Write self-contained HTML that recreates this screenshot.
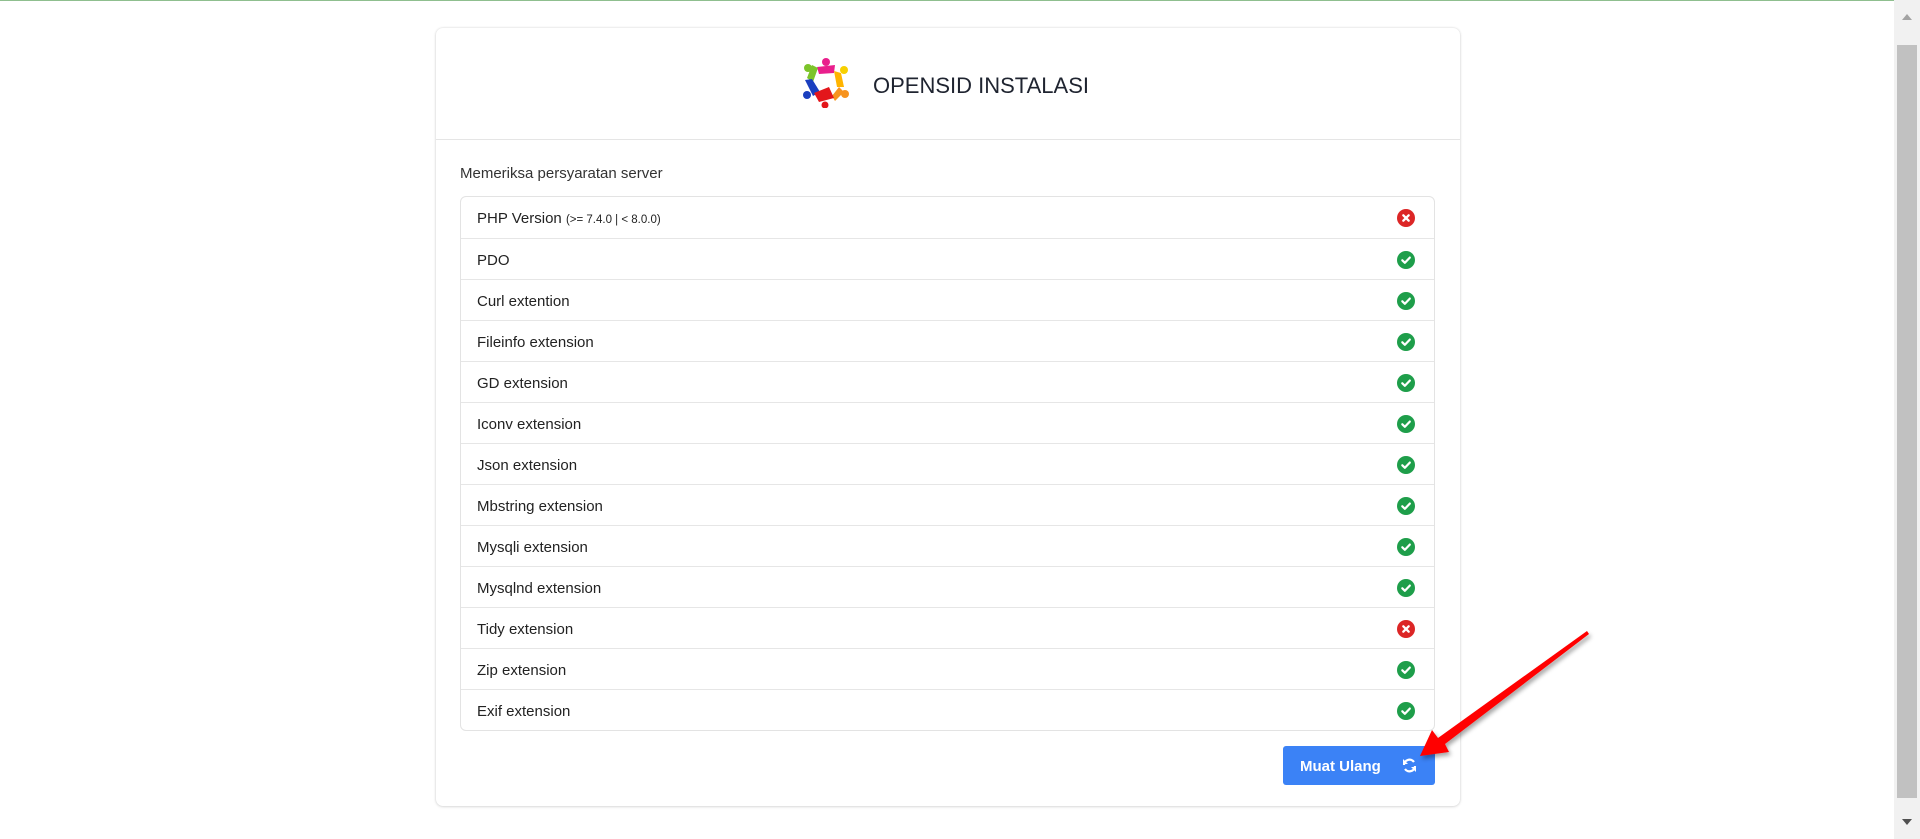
<!DOCTYPE html>
<html><head><meta charset="utf-8">
<style>
*{box-sizing:border-box;margin:0;padding:0}
body{width:1920px;height:839px;overflow:hidden;background:#fff;font-family:"Liberation Sans",sans-serif;color:#212529;position:relative}
.topline{position:absolute;left:0;top:0;width:1894px;height:1px;background:#8fbf8f}
.card{position:absolute;left:436px;top:28px;width:1024px;height:778px;border-radius:7px;background:#fff;box-shadow:0 0 2px rgba(0,0,0,.15),0 1px 3px rgba(0,0,0,.1)}
.hdr{height:112px;border-bottom:1px solid #e5e5e5;position:relative}
.title{position:absolute;left:437px;top:45px;font-size:22px;font-weight:500;color:#1f2430}
.logo{position:absolute;left:367px;top:30px}
.sub{position:absolute;left:24px;top:137px;font-size:15px;color:#333}
.list{position:absolute;left:24px;top:168px;width:975px;border:1px solid #e3e3e3;border-radius:6px}
.row{height:41px;border-top:1px solid #e6e6e6;position:relative;font-size:15px;line-height:43px;padding-left:16px;color:#222}
.row:first-child{border-top:none}
.row small{font-size:11.5px}
.ic{position:absolute;right:19px;top:12px;width:18px;height:18px;border-radius:50%}
.ok{background:#1e9e4a}.no{background:#dc2626}
.ic svg{position:absolute;left:0;top:0}
.btn{position:absolute;left:847px;top:718px;width:152px;height:39px;background:#3b82f6;border-radius:3px;color:#fff;font-weight:bold;font-size:15px;line-height:41px;padding-left:17px}
.btn svg{position:absolute;left:118px;top:11px}
.sb{position:absolute;left:1894px;top:0;width:26px;height:839px;background:#f1f1f1}
.thumb{position:absolute;left:3px;top:45px;width:20px;height:753px;background:#c1c1c1}
</style></head><body>
<div class="topline"></div>
<div class="card">
 <div class="hdr">
  <svg class="logo" width="46" height="50" viewBox="0 0 46 50">
   <circle cx="23" cy="4" r="4" fill="#e91e8c"/><path d="M14 9 L32 7 L31 15 L16 16Z" fill="#e91e8c"/>
   <circle cx="5" cy="10" r="4" fill="#7cc42a"/><path d="M9 7 L15 10 L10 24 L4 20Z" fill="#7cc42a"/>
   <circle cx="41" cy="12" r="4" fill="#f7d000"/><path d="M31 13 L38 15 L41 29 L34 29Z" fill="#ffb400"/>
   <circle cx="4" cy="37" r="4" fill="#1a3fbf"/><path d="M2 22 L9 21 L17 34 L10 38Z" fill="#1a3fbf"/>
   <circle cx="42" cy="36" r="4" fill="#f7931e"/><path d="M36 29 L41 34 L32 43 L29 38Z" fill="#f7931e"/>
   <circle cx="22" cy="47" r="3.5" fill="#e3161b"/><path d="M11 35 L26 29 L31 40 L16 44Z" fill="#e3161b"/>
  </svg>
  <div class="title">OPENSID INSTALASI</div>
 </div>
 <div class="sub">Memeriksa persyaratan server</div>
 <div class="list">
  <div class="row">PHP Version <small>(&gt;= 7.4.0 | &lt; 8.0.0)</small><span class="ic no"><svg width="18" height="18"><path d="M6.3 6.3L11.7 11.7M11.7 6.3L6.3 11.7" stroke="#fff" stroke-width="2.3" stroke-linecap="round"/></svg></span></div>
  <div class="row">PDO<span class="ic ok"><svg width="18" height="18"><path d="M5.3 9.3L7.9 11.8L12.8 6.6" stroke="#fff" stroke-width="2.2" fill="none" stroke-linecap="round" stroke-linejoin="round"/></svg></span></div>
  <div class="row">Curl extention<span class="ic ok"><svg width="18" height="18"><path d="M5.3 9.3L7.9 11.8L12.8 6.6" stroke="#fff" stroke-width="2.2" fill="none" stroke-linecap="round" stroke-linejoin="round"/></svg></span></div>
  <div class="row">Fileinfo extension<span class="ic ok"><svg width="18" height="18"><path d="M5.3 9.3L7.9 11.8L12.8 6.6" stroke="#fff" stroke-width="2.2" fill="none" stroke-linecap="round" stroke-linejoin="round"/></svg></span></div>
  <div class="row">GD extension<span class="ic ok"><svg width="18" height="18"><path d="M5.3 9.3L7.9 11.8L12.8 6.6" stroke="#fff" stroke-width="2.2" fill="none" stroke-linecap="round" stroke-linejoin="round"/></svg></span></div>
  <div class="row">Iconv extension<span class="ic ok"><svg width="18" height="18"><path d="M5.3 9.3L7.9 11.8L12.8 6.6" stroke="#fff" stroke-width="2.2" fill="none" stroke-linecap="round" stroke-linejoin="round"/></svg></span></div>
  <div class="row">Json extension<span class="ic ok"><svg width="18" height="18"><path d="M5.3 9.3L7.9 11.8L12.8 6.6" stroke="#fff" stroke-width="2.2" fill="none" stroke-linecap="round" stroke-linejoin="round"/></svg></span></div>
  <div class="row">Mbstring extension<span class="ic ok"><svg width="18" height="18"><path d="M5.3 9.3L7.9 11.8L12.8 6.6" stroke="#fff" stroke-width="2.2" fill="none" stroke-linecap="round" stroke-linejoin="round"/></svg></span></div>
  <div class="row">Mysqli extension<span class="ic ok"><svg width="18" height="18"><path d="M5.3 9.3L7.9 11.8L12.8 6.6" stroke="#fff" stroke-width="2.2" fill="none" stroke-linecap="round" stroke-linejoin="round"/></svg></span></div>
  <div class="row">Mysqlnd extension<span class="ic ok"><svg width="18" height="18"><path d="M5.3 9.3L7.9 11.8L12.8 6.6" stroke="#fff" stroke-width="2.2" fill="none" stroke-linecap="round" stroke-linejoin="round"/></svg></span></div>
  <div class="row">Tidy extension<span class="ic no"><svg width="18" height="18"><path d="M6.3 6.3L11.7 11.7M11.7 6.3L6.3 11.7" stroke="#fff" stroke-width="2.3" stroke-linecap="round"/></svg></span></div>
  <div class="row">Zip extension<span class="ic ok"><svg width="18" height="18"><path d="M5.3 9.3L7.9 11.8L12.8 6.6" stroke="#fff" stroke-width="2.2" fill="none" stroke-linecap="round" stroke-linejoin="round"/></svg></span></div>
  <div class="row">Exif extension<span class="ic ok"><svg width="18" height="18"><path d="M5.3 9.3L7.9 11.8L12.8 6.6" stroke="#fff" stroke-width="2.2" fill="none" stroke-linecap="round" stroke-linejoin="round"/></svg></span></div>
 </div>
 <div class="btn">Muat Ulang<svg width="17" height="17" viewBox="0 0 17 17"><path d="M3 8 A5.5 5.5 0 0 1 13 5" stroke="#fff" stroke-width="2.2" fill="none"/><path d="M2 2 L2 7 L7 7Z" fill="#fff"/><path d="M14 9 A5.5 5.5 0 0 1 4 12" stroke="#fff" stroke-width="2.2" fill="none"/><path d="M15 15 L15 10 L10 10Z" fill="#fff"/></svg></div>
</div>
<svg style="position:absolute;left:0;top:0" width="1920" height="839">
 <defs><filter id="sh" x="-20%" y="-20%" width="140%" height="140%"><feDropShadow dx="2" dy="3" stdDeviation="2" flood-opacity=".35"/></filter></defs>
 <path d="M1587 631 L1589 634 L1445 744 L1449 752 L1420 756 L1432 730 L1438 738Z" fill="#ff0000" filter="url(#sh)"/>
</svg>
<div class="sb"><div class="thumb"></div>
 <svg style="position:absolute;left:8px;top:14px" width="10" height="6"><path d="M0 6L5 0L10 6Z" fill="#a3a3a3"/></svg>
 <svg style="position:absolute;left:8px;top:819px" width="10" height="6"><path d="M0 0L5 6L10 0Z" fill="#505050"/></svg>
</div>
</body></html>
